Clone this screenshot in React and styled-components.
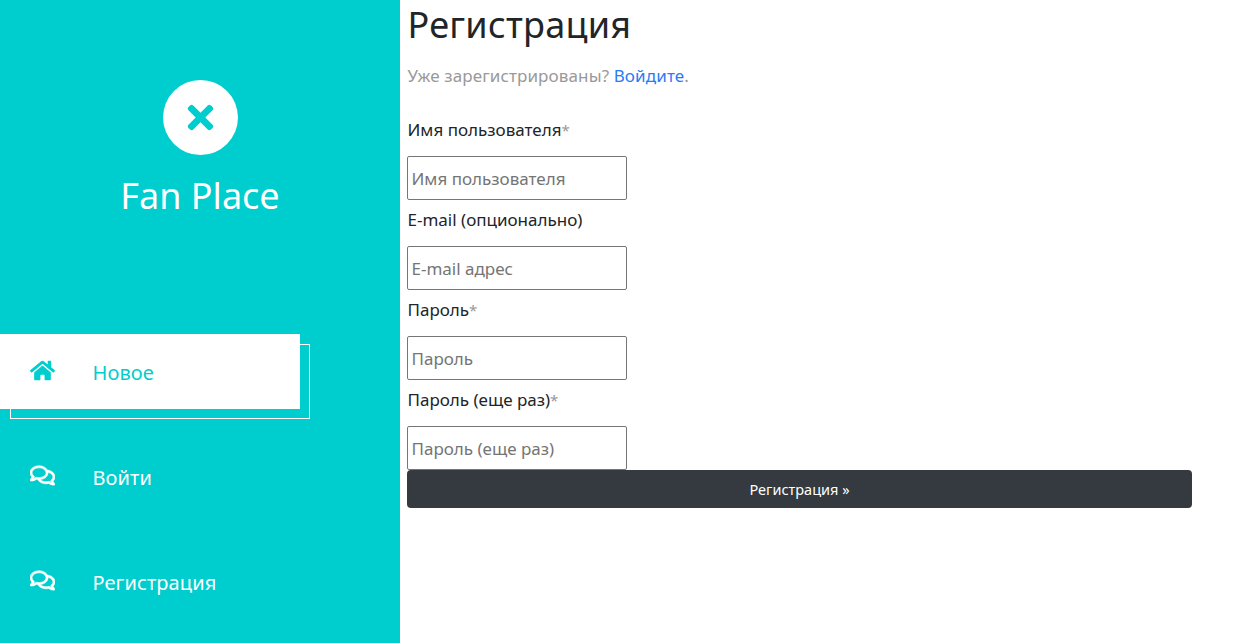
import React from "react";
import styled, { createGlobalStyle } from "styled-components";
import { FaHome, FaRegComments, FaTimes } from "react-icons/fa";

const GlobalStyle = createGlobalStyle`
  html, body {
    margin: 0;
    padding: 0;
    background: #fff;
    font-family: "Noto Sans", sans-serif;
    color: #212529;
  }
  *, *::before, *::after {
    box-sizing: border-box;
  }
`;

const fields = [
  { label: "Имя пользователя", placeholder: "Имя пользователя", required: true },
  { label: "E-mail (опционально)", placeholder: "E-mail адрес" },
  { label: "Пароль", placeholder: "Пароль", required: true, type: "password" },
  { label: "Пароль (еще раз)", placeholder: "Пароль (еще раз)", required: true, type: "password" },
];

export default function App() {
  return (
    <Page>
      <GlobalStyle />
      <Sidebar>
        <Brand>
          <LogoCircle>
            <FaTimes />
          </LogoCircle>
          <BrandName>Fan Place</BrandName>
        </Brand>
        <Nav>
          <NavItem $active href="#">
            <NavIcon>
              <FaHome />
            </NavIcon>
            Новое
          </NavItem>
          <NavItem href="#">
            <NavIcon $bold>
              <FaRegComments />
            </NavIcon>
            Войти
          </NavItem>
          <NavItem href="#">
            <NavIcon $bold>
              <FaRegComments />
            </NavIcon>
            Регистрация
          </NavItem>
        </Nav>
      </Sidebar>
      <Content>
        <Title>Регистрация</Title>
        <Lead>
          Уже зарегистрированы? <a href="#">Войдите</a>.
        </Lead>
        <Form>
          {fields.map((field) => (
            <Field key={field.label}>
              <Label>
                {field.label}
                {field.required && <Star>*</Star>}
              </Label>
              <Input type={field.type || "text"} placeholder={field.placeholder} />
            </Field>
          ))}
          <Submit type="button">Регистрация »</Submit>
        </Form>
      </Content>
    </Page>
  );
}

const Page = styled.div`
  display: flex;
  min-height: 643px;
  overflow: hidden;
`;

const Sidebar = styled.aside`
  width: 400px;
  height: 643px;
  flex-shrink: 0;
  background: #00cdcd;
  color: #fff;
  padding-top: 80px;
  isolation: isolate;
`;

const Brand = styled.div`
  display: flex;
  flex-direction: column;
  align-items: center;
`;

const LogoCircle = styled.div`
  width: 75px;
  height: 75px;
  border-radius: 50%;
  background: #fff;
  color: #00cdcd;
  display: flex;
  align-items: center;
  justify-content: center;
  font-size: 37px;
`;

const BrandName = styled.div`
  margin-top: 16px;
  font-size: 36px;
  line-height: 50px;
`;

const Nav = styled.nav`
  margin-top: 113px;
  display: flex;
  flex-direction: column;
  gap: 30px;
`;

const NavItem = styled.a`
  position: relative;
  display: flex;
  align-items: center;
  width: 300px;
  height: 75px;
  padding: 1px 0 0 30px;
  font-size: 20px;
  letter-spacing: 0.1px;
  text-decoration: none;
  color: ${({ $active }) => ($active ? "#00cdcd" : "#fff")};
  background: ${({ $active }) => ($active ? "#fff" : "transparent")};

  ${({ $active }) =>
    $active &&
    `
    &::after {
      content: "";
      position: absolute;
      left: 10px;
      top: 10px;
      width: 300px;
      height: 75px;
      border: 1px solid #fff;
      z-index: -1;
    }
  `}
`;

const NavIcon = styled.span`
  display: flex;
  width: 62.5px;
  font-size: 25px;
  margin-top: -4px;

  svg {
    stroke-width: ${({ $bold }) => ($bold ? "14px" : "0")};
  }
`;

const Content = styled.main`
  width: 792px;
  padding-left: 7px;
`;

const Title = styled.h1`
  margin: 0 0 0 0.5px;
  font-size: 36px;
  font-weight: 400;
  line-height: 50px;
  letter-spacing: 0.27px;
`;

const Lead = styled.p`
  margin: 13px 0 0 0.5px;
  font-size: 17px;
  line-height: 26px;
  letter-spacing: 0.12px;
  color: #999;

  a {
    color: #2a7bf6;
    text-decoration: none;
  }
`;

const Form = styled.form`
  margin-top: 21px;
  display: flex;
  flex-direction: column;
`;

const Field = styled.div`
  display: flex;
  flex-direction: column;
`;

const Label = styled.label`
  height: 46px;
  margin-left: 0.5px;
  font-size: 17px;
  line-height: 26px;
  padding-top: 7px;
`;

const Star = styled.span`
  color: #999;
  font-size: 15px;
`;

const Input = styled.input`
  width: 220px;
  height: 44px;
  border: 1px solid #767676;
  border-radius: 2px;
  padding: 1px 3.5px;
  font-family: "Noto Sans", sans-serif;
  font-size: 17px;
  color: #212529;

  &::placeholder {
    color: #757575;
  }
`;

const Submit = styled.button`
  width: 785px;
  height: 38px;
  border: 0;
  border-radius: 4px;
  background: #343a40;
  color: #fff;
  font-family: "Noto Sans", sans-serif;
  font-size: 14.5px;
`;
